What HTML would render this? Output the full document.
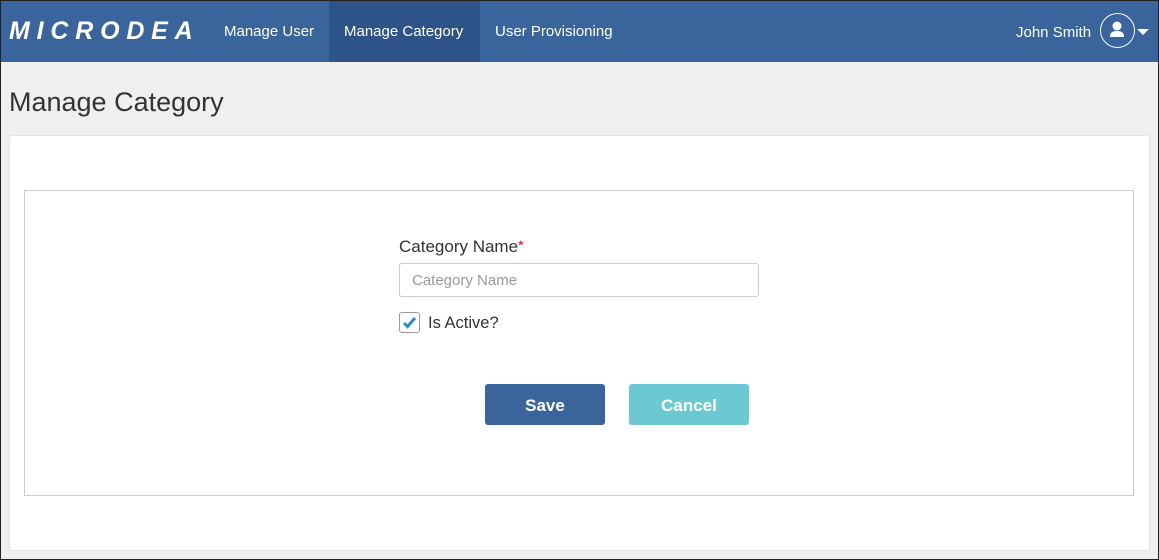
<!DOCTYPE html>
<html><head><style>
*{box-sizing:border-box;margin:0;padding:0}
body{width:1159px;height:560px;background:#efefef;font-family:"Liberation Sans",sans-serif;position:relative;overflow:hidden}
.frame{position:absolute;left:0;top:0;width:1159px;height:560px;border:1px solid #222;z-index:5;pointer-events:none}
.nav{position:absolute;left:0;top:0;width:1159px;height:62px;background:#3a649c;color:#fff}
.logo{position:absolute;left:9px;top:17px;font-size:25px;font-weight:bold;font-style:italic;letter-spacing:6.8px}
.tab{position:absolute;top:0;height:62px;line-height:64px;font-size:15px;padding:0 15px}
.act{background:#2d5389}
.user{position:absolute;top:24px;font-size:15px}
.av{position:absolute;left:1100px;top:13px;width:35px;height:35px;border:1.5px solid #fff;border-radius:50%}
.caret{position:absolute;left:1137px;top:29px;border:6px solid transparent;border-top:6px solid #fff}
h1{position:absolute;left:9px;top:87px;font-size:27px;font-weight:normal;color:#333}
.card{position:absolute;left:9px;top:135px;width:1141px;height:416px;background:#fff;border-radius:3px;border:1px solid #e3e3e3}
.box{position:absolute;left:24px;top:190px;width:1110px;height:306px;border:1px solid #ccc}
.lbl{position:absolute;left:399px;top:237px;font-size:17px;color:#333}
.inp{position:absolute;left:399px;top:263px;width:360px;height:34px;border:1px solid #ccc;border-radius:3px;font-size:15px;color:#999;padding:8px 12px}
.cb{position:absolute;left:399px;top:312px;width:21px;height:21px;border:1px solid #999;border-radius:3px}
.ia{position:absolute;left:428px;top:314px;font-size:16.5px;color:#333}
.btn{position:absolute;top:384px;width:120px;height:41px;border-radius:3px;color:#fff;font-size:17px;font-weight:bold;text-align:center;line-height:43px}
</style></head><body>
<div class="frame"></div>
<div class="nav">
<div class="logo">MICRODEA</div>
<div class="tab" style="left:209px">Manage User</div>
<div class="tab act" style="left:329px;width:151px">Manage Category</div>
<div class="tab" style="left:480px">User Provisioning</div>
<div class="user" style="left:1016px">John Smith</div>
<div class="av"><svg width="32" height="32" viewBox="0 0 32 32"><circle cx="16" cy="12" r="4.5" fill="#fff"/><path d="M9 23c0-5 3-6 7-6s7 1 7 6z" fill="#fff"/></svg></div>
<div class="caret"></div>
</div>
<h1>Manage Category</h1>
<div class="card"></div>
<div class="box"></div>
<div class="lbl">Category Name<span style="color:#e00;font-size:14px;vertical-align:top">*</span></div>
<div class="inp">Category Name</div>
<div class="cb"><svg width="19" height="19" viewBox="0 0 19 19"><path d="M4 10l3.5 3.5L15 5" stroke="#2a8cc8" stroke-width="3" fill="none"/></svg></div>
<div class="ia">Is Active?</div>
<div class="btn" style="left:485px;background:#3a649c">Save</div>
<div class="btn" style="left:629px;background:#6bc9d3">Cancel</div>
</body></html>
